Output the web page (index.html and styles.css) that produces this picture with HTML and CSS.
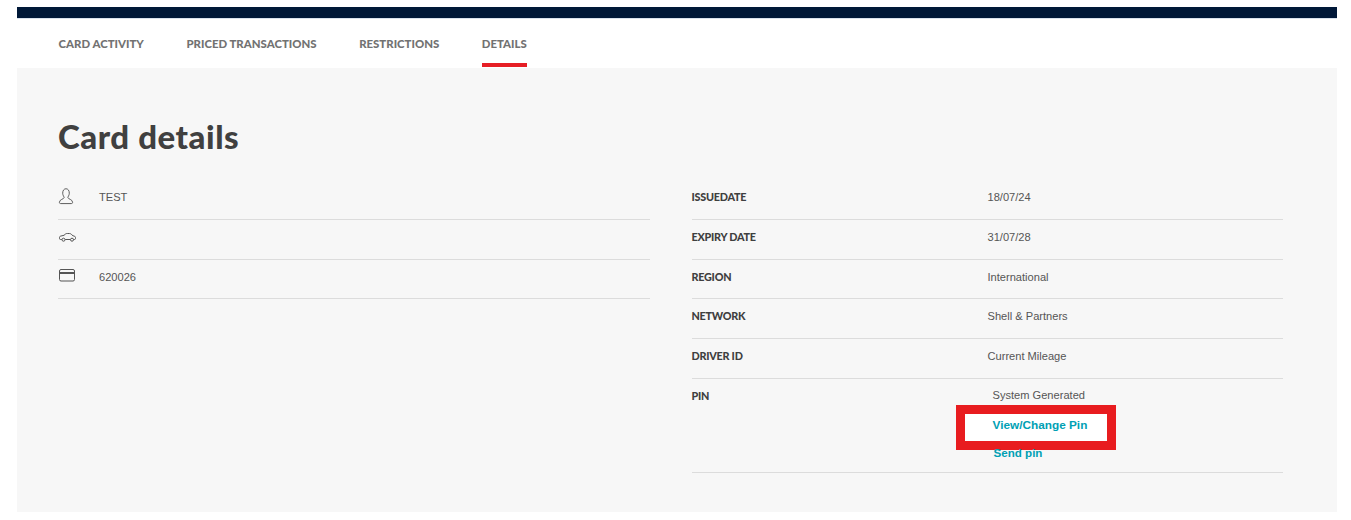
FILE: index.html
```html
<!DOCTYPE html>
<html lang="en">
<head>
<meta charset="utf-8">
<title>Card details</title>
<link rel="stylesheet" href="styles.css">
</head>
<body>
<div class="page">
  <div class="topbar"></div>
  <nav class="tabs">
    <a class="tab">CARD ACTIVITY</a>
    <a class="tab">PRICED TRANSACTIONS</a>
    <a class="tab">RESTRICTIONS</a>
    <a class="tab active">DETAILS</a>
  </nav>
  <main class="panel">
    <h1 class="title">Card details</h1>
    <div class="columns">
      <section class="col">
        <div class="row">
          <span class="icon-cell"><svg class="icon" width="16" height="17" viewBox="0 0 16 18" fill="none" stroke="#555" stroke-width="1"><path d="M4.500 5.500C4.500 2.500 6 .8 8 .8s3.500 1.700 3.500 4.700c0 2.200-1.500 3.700-1.500 4.700 0 1.500 5 1.800 5 5 0 .8-.5 1.300-1.300 1.300H2.300c-.8 0-1.300-.5-1.300-1.300 0-3.200 5-3.500 5-5 0-1-1.500-2.500-1.500-4.700z"/></svg></span>
          <span class="val">TEST</span>
        </div>
        <div class="row">
          <span class="icon-cell"><svg class="icon car" width="17" height="9" viewBox="0 0 17 9" fill="none" stroke="#555" stroke-width="1"><path d="M2.800 6.500H1.500C.8 6.500.5 6 .5 5.400V4.300c0-.7.6-1.100 1.500-1.300L5 2.300 6.500 1C7 .6 7.500.5 8.300.5h2.200c.8 0 1.300.3 1.800.8L14 2.800c1.500.2 2.500.7 2.500 1.800v.9c0 .6-.4 1-1 1h-1M6.200 6.500h5.100"/><circle cx="4.500" cy="6.700" r="1.500"/><circle cx="13" cy="6.700" r="1.500"/></svg></span>
          <span class="val"></span>
        </div>
        <div class="row">
          <span class="icon-cell"><svg class="icon card" width="16" height="13" viewBox="0 0 16 13" fill="none" stroke="#555" stroke-width="1"><rect x=".5" y=".5" width="15" height="11.500" rx="1.500"/><path d="M.5 4h15" stroke-width="2"/></svg></span>
          <span class="val">620026</span>
        </div>
      </section>
      <section class="col">
        <div class="row"><span class="key">ISSUEDATE</span><span class="val">18/07/24</span></div>
        <div class="row"><span class="key">EXPIRY DATE</span><span class="val">31/07/28</span></div>
        <div class="row"><span class="key">REGION</span><span class="val">International</span></div>
        <div class="row"><span class="key">NETWORK</span><span class="val">Shell &amp; Partners</span></div>
        <div class="row"><span class="key">DRIVER ID</span><span class="val">Current Mileage</span></div>
        <div class="row pin-row">
          <span class="key">PIN</span>
          <div class="pin">
            <span class="val">System Generated</span>
            <a class="link view">View/Change Pin<span class="highlight"></span></a>
            <a class="link send">Send pin</a>
          </div>
        </div>
      </section>
    </div>
  </main>
</div>
</body>
</html>
```

FILE: styles.css
```css
* { box-sizing: border-box; }
html, body { margin: 0; background: #fff; }
body { font-family: "Liberation Sans", Arial, sans-serif; color: #555; }
.page { width: 1320px; margin-left: 17px; padding-top: 7px; }
.topbar { height: 12px; background: #001838; border-bottom: 1px solid #d8e2ee; }
.tabs { display: flex; gap: 42.600px; height: 49px; padding-left: 41.500px; background: #fff; }
.tab {
  font-family: Lato, sans-serif; font-weight: 900; font-size: 11.400px; color: #727272;
  line-height: 14px; padding-top: 18px; height: 48px;
}
.tab.active { border-bottom: 4px solid #e61e25; }
.panel { background: #f7f7f7; height: 444px; padding: 48px 54px 0 41px; }
.title {
  margin: 0; font-family: Lato, sans-serif; font-weight: 900; font-size: 33px;
  letter-spacing: .55px; line-height: 40px; color: #404040;
}
.columns { display: flex; gap: 42px; margin-top: 24.300px; }
.col { width: 592px; }
.row {
  display: flex; height: 39.700px; padding-top: 10px;
  border-bottom: 1px solid #dcdcdc; font-size: 11.100px; line-height: 14px;
}
.icon-cell { width: 41px; flex: none; margin-top: -2px; }
.icon { display: block; }
.car { margin-top: 5px; margin-left: 1px; }
.card { margin-top: 1px; margin-left: 1px; }
.val { color: #555; font-size: 11.100px; }
.key {
  width: 296px; flex: none; font-family: Lato, sans-serif; font-weight: 900;
  font-size: 10.800px; letter-spacing: -.25px; color: #3f3f3f;
}
.pin-row { height: 94.200px; }
.pin { display: flex; flex-direction: column; align-items: flex-start; padding-left: 5px; margin-top: -1px; }
.link { color: #00a0b4; font-weight: 700; font-size: 11.600px; line-height: 14px; }
.view { position: relative; margin-top: 16px; z-index: 0; font-size: 11.800px; }
.send { margin-top: 14px; margin-left: 1px; position: relative; }
.highlight {
  position: absolute; z-index: -1; left: -37px; top: -13px; width: 160px; height: 45px;
  border: 9px solid #e81c1f; background: #fff;
}
```
